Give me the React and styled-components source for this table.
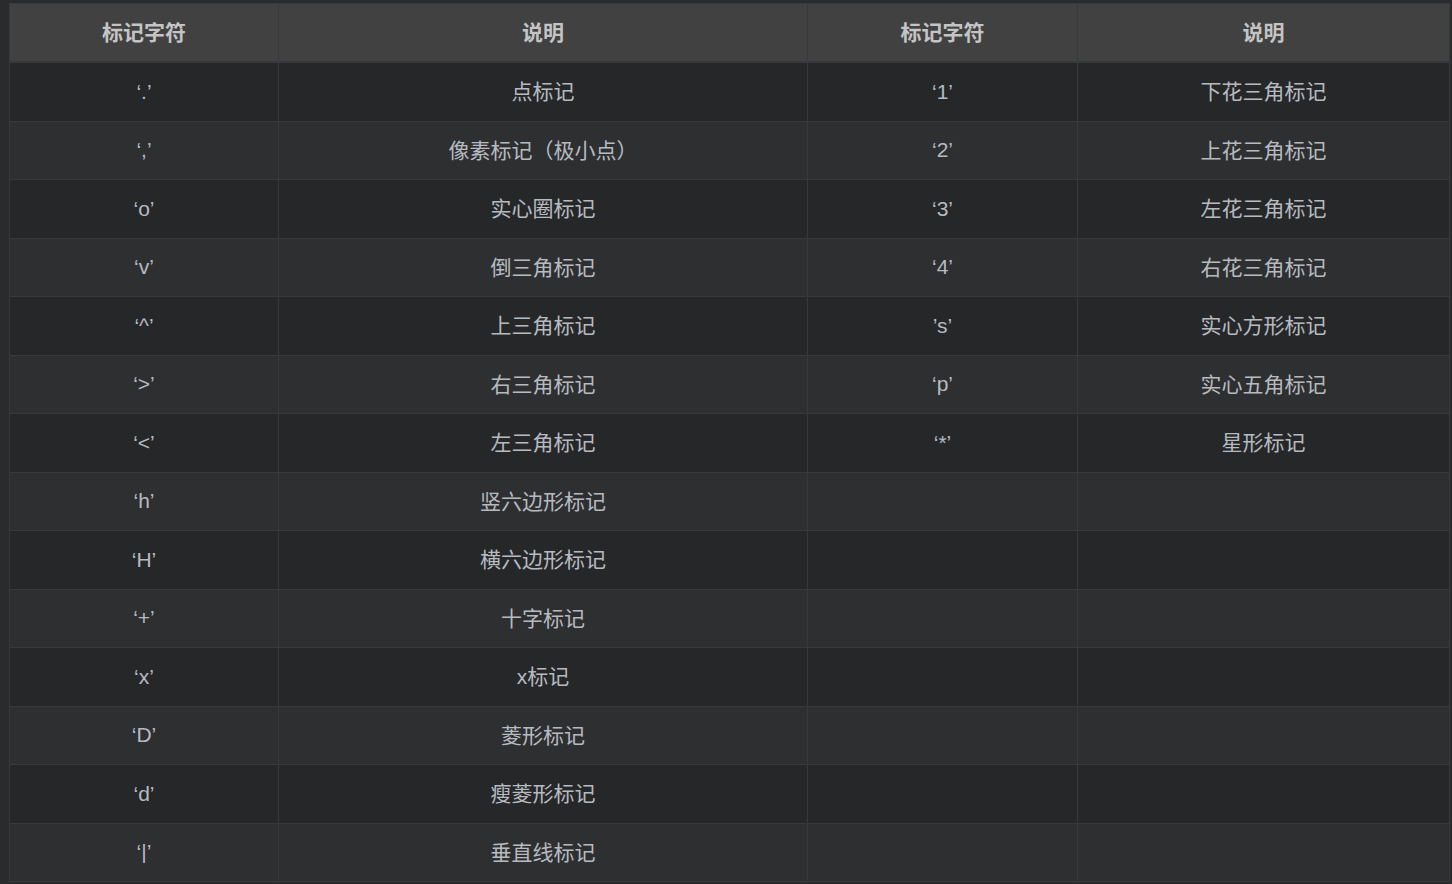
import React from 'react';
import styled, { createGlobalStyle } from 'styled-components';

const rows = [
  ['‘.’', '点标记', '‘1’', '下花三角标记'],
  ['‘,’', '像素标记（极小点）', '‘2’', '上花三角标记'],
  ['‘o’', '实心圈标记', '‘3’', '左花三角标记'],
  ['‘v’', '倒三角标记', '‘4’', '右花三角标记'],
  ['‘^’', '上三角标记', '’s’', '实心方形标记'],
  ['‘>’', '右三角标记', '‘p’', '实心五角标记'],
  ['‘<’', '左三角标记', '‘*’', '星形标记'],
  ['‘h’', '竖六边形标记', '', ''],
  ['‘H’', '横六边形标记', '', ''],
  ['‘+’', '十字标记', '', ''],
  ['‘x’', 'x标记', '', ''],
  ['‘D’', '菱形标记', '', ''],
  ['‘d’', '瘦菱形标记', '', ''],
  ['‘|’', '垂直线标记', '', ''],
];

const headers = ['标记字符', '说明', '标记字符', '说明'];
const widths = [269, 529, 270, 372];

const App = () => {
  return (
    <>
      <GlobalStyle />
      <Page>
        <Table>
          <colgroup>
            {widths.map((w, i) => <col key={i} style={{ width: w }} />)}
          </colgroup>
          <thead>
            <tr>
              {headers.map((h, i) => <Th key={i}>{h}</Th>)}
            </tr>
          </thead>
          <tbody>
            {rows.map((r, i) => (
              <Row key={i} $even={i % 2 === 1}>
                {r.map((c, j) => <Td key={j} $cjk={j % 2 === 1}>{c}</Td>)}
              </Row>
            ))}
          </tbody>
        </Table>
      </Page>
    </>
  );
}

export default App

const GlobalStyle = createGlobalStyle`
  body {
    margin: 0;
    background: #2a2b2c;
    font-family: "Liberation Sans", "Noto Sans CJK SC", sans-serif;
  }
`

const Page = styled.div`
  padding: 3px 2px 0 9px;
  height: 884px;
  box-sizing: border-box;
  overflow: hidden;
`

const Table = styled.table`
  width: 1441px;
  table-layout: fixed;
  border-collapse: collapse;
  border: 1px solid #38393b;
`

const Th = styled.th`
  height: 54px;
  padding: 0 0 3px;
  background: #414141;
  color: #c4c4c4;
  font-size: 21px;
  font-weight: 700;
  text-align: center;
  border: 1px solid #38393b;
  border-bottom-width: 2px;
`

const Row = styled.tr`
  background: ${p => (p.$even ? '#2e2f31' : '#262729')};
`

const Td = styled.td`
  height: ${p => (p.$cjk ? '54.5px' : '57.5px')};
  padding: ${p => (p.$cjk ? '0 0 3px' : '0')};
  color: #b7bbc0;
  font-size: 21px;
  text-align: center;
  border: 1px solid #38393b;
`
